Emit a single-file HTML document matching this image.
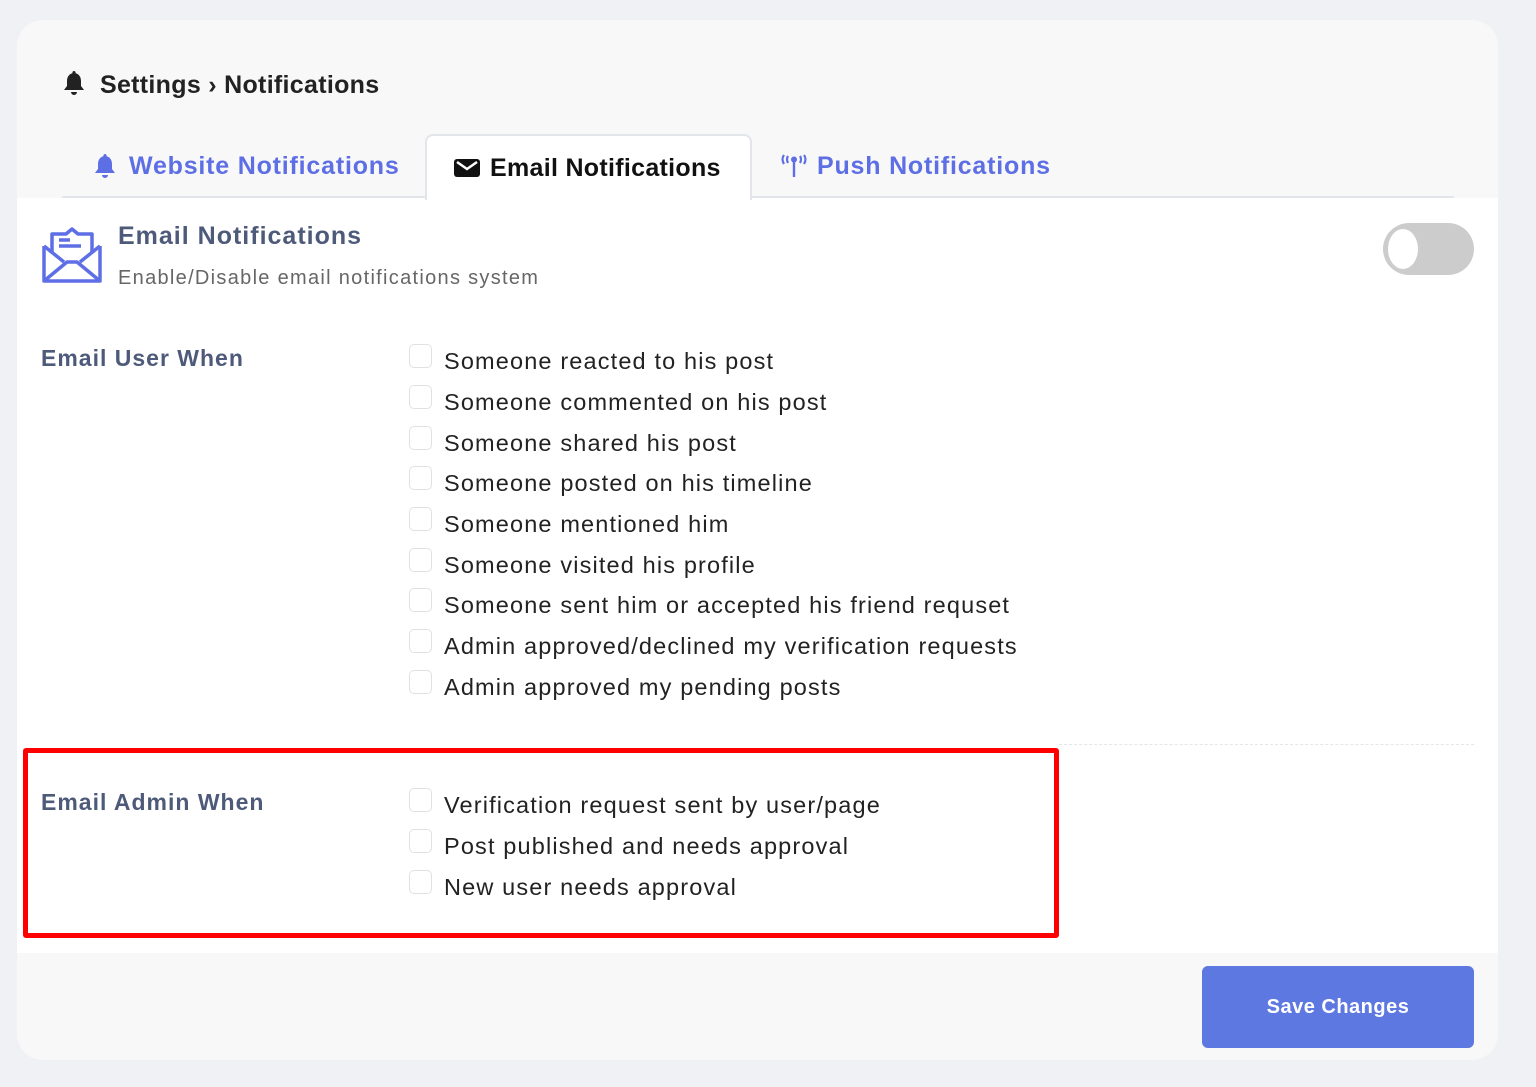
<!DOCTYPE html>
<html><head><meta charset="utf-8"><style>
*{box-sizing:border-box;margin:0;padding:0}
body{width:1536px;height:1087px;background:#f0f1f5;font-family:"Liberation Sans",sans-serif;position:relative;overflow:hidden}
.card{position:absolute;left:17px;top:20px;width:1481px;height:1040px;background:#f8f8f8;border-radius:26px;overflow:hidden}
.abs{position:absolute}
.title{left:83px;top:51px;font-size:25px;font-weight:bold;color:#222;letter-spacing:.3px}
.tabline{left:45px;top:176px;width:1392px;height:2px;background:#e2e5ea}
.tab{top:114px;height:64px;font-size:25px;font-weight:bold;color:#5e6fe6;display:flex;align-items:center;letter-spacing:.8px}
.tab.active{left:408px;width:327px;background:#fff;border:2px solid #e2e5ea;border-bottom:none;border-radius:8px 8px 0 0;color:#111;padding-left:27px;height:66px;letter-spacing:.3px}
.white{left:0;top:178px;width:1481px;height:755px;background:#fff}
.h{font-size:24px;font-weight:bold;color:#4e5a7a;letter-spacing:1px}
.sub{font-size:20px;color:#666;letter-spacing:1.3px}
.item{left:392px;font-size:23.5px;color:#222;letter-spacing:1.15px;height:30px;line-height:30px}
.item:before{content:"";position:absolute;left:0;top:-2px;width:21px;height:22px;border:1.5px solid #dfe1e5;border-radius:5px}
.item span{margin-left:35px}
.toggle{left:1366px;top:203px;width:91px;height:52px;background:#ccc;border-radius:26px}
.toggle:after{content:"";position:absolute;left:5px;top:6px;width:30px;height:40px;background:#fff;border-radius:50%}
.btn{left:1185px;top:946px;width:272px;height:82px;background:#5e78e2;border-radius:6px;color:#fff;font-size:20px;font-weight:bold;display:flex;align-items:center;justify-content:center;letter-spacing:.5px}
.red{left:6px;top:728px;width:1036px;height:190px;border:5px solid #f00;border-radius:3px}
.dash{left:1042px;top:724px;width:415px;border-top:1px dashed #e4e6ea}
</style></head><body>
<div class="card">
 <div class="abs white"></div>
 <svg class="abs" style="left:45px;top:50px" width="24" height="26" viewBox="0 0 24 26"><path d="M12 1c1 0 1.6.7 1.6 1.6v.6C17 4 19 7 19 11v5l3 4H2l3-4v-5c0-4 2-7 5.4-7.8v-.6C10.4 1.7 11 1 12 1z M9 22h6a3 3 0 0 1-6 0z" fill="#222"/></svg>
 <div class="abs title">Settings › Notifications</div>
 <div class="abs tabline"></div>
 <div class="abs tab" style="left:76px"><svg width="24" height="26" viewBox="0 0 24 26" style="margin-right:12px"><path d="M12 1c1 0 1.6.7 1.6 1.6v.6C17 4 19 7 19 11v5l3 4H2l3-4v-5c0-4 2-7 5.4-7.8v-.6C10.4 1.7 11 1 12 1z M9 22h6a3 3 0 0 1-6 0z" fill="#5e6fe6"/></svg>Website Notifications</div>
 <div class="abs tab active"><svg width="26" height="20" viewBox="0 0 26 20" style="margin-right:10px"><rect x="0" y="1" width="26" height="18" rx="3" fill="#111"/><path d="M3 4l10 7 10-7" stroke="#fff" stroke-width="2.5" fill="none"/></svg>Email Notifications</div>
 <div class="abs tab" style="left:762px"><svg width="30" height="28" viewBox="0 0 30 28" style="margin-right:8px"><path d="M5 3q-3 4 0 9M9 4q-2 3 0 7M25 3q3 4 0 9M21 4q2 3 0 7" stroke="#5e6fe6" stroke-width="2.2" fill="none"/><circle cx="15" cy="7.5" r="3" fill="#5e6fe6"/><rect x="13.8" y="8" width="2.4" height="17" fill="#5e6fe6"/></svg>Push Notifications</div>

 <svg class="abs" style="left:24px;top:202px" width="62" height="62" viewBox="0 0 62 62"><g stroke="#5e6fe6" stroke-width="3.5" fill="none" stroke-linejoin="round"><path d="M3 24v35h56V24"/><path d="M3 59l23-19h10l23 19"/><path d="M3 24l20 16M59 24l-20 16"/><path d="M11 30V12h14l6-5 6 5h14v18"/><path d="M18 18h11M18 24h22"/></g></svg>
 <div class="abs h" style="left:101px;top:202px;font-size:25px">Email Notifications</div>
 <div class="abs sub" style="left:101px;top:247px">Enable/Disable email notifications system</div>
 <div class="abs toggle"></div>

 <div class="abs h" style="left:24px;top:325px;font-size:23px">Email User When</div>
 <div class="abs item" style="top:326px"><span>Someone reacted to his post</span></div>
 <div class="abs item" style="top:367px"><span>Someone commented on his post</span></div>
 <div class="abs item" style="top:408px"><span>Someone shared his post</span></div>
 <div class="abs item" style="top:448px"><span>Someone posted on his timeline</span></div>
 <div class="abs item" style="top:489px"><span>Someone mentioned him</span></div>
 <div class="abs item" style="top:530px"><span>Someone visited his profile</span></div>
 <div class="abs item" style="top:570px"><span>Someone sent him or accepted his friend requset</span></div>
 <div class="abs item" style="top:611px"><span>Admin approved/declined my verification requests</span></div>
 <div class="abs item" style="top:652px"><span>Admin approved my pending posts</span></div>

 <div class="abs dash"></div>
 <div class="abs h" style="left:24px;top:769px;font-size:23px">Email Admin When</div>
 <div class="abs item" style="top:770px"><span>Verification request sent by user/page</span></div>
 <div class="abs item" style="top:811px"><span>Post published and needs approval</span></div>
 <div class="abs item" style="top:852px"><span>New user needs approval</span></div>
 <div class="abs red"></div>

 <div class="abs btn">Save Changes</div>
</div>
</body></html>
